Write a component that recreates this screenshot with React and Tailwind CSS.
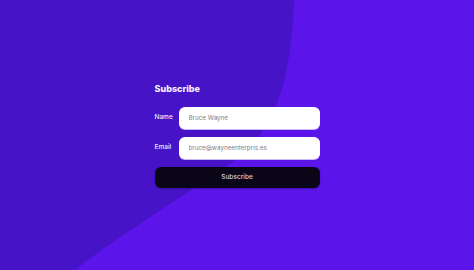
import React from "react";

function Backdrop() {
  return (
    <svg
      className="absolute inset-0 w-full h-full"
      viewBox="0 0 474 270"
      preserveAspectRatio="none"
      aria-hidden="true"
    >
      <path
        d="M0 0 H294 C291 70 281 125 235 160 C190 192 112 240 75 270 H0 Z"
        fill="#4613c6"
      />
    </svg>
  );
}

function Field({ label, placeholder, type = "text" }) {
  return (
    <div className="flex items-center">
      <label className="w-[24px] shrink-0 text-[6.5px] font-medium text-[#efe6ff]">{label}</label>
      <input
        type={type}
        placeholder={placeholder}
        className="h-[22px] w-[141px] rounded-[6px] bg-white pl-[10px] text-[6.3px] text-[#333] placeholder:text-[#808086] outline-none shadow-[0_1px_0_#c9b6ff]"
      />
    </div>
  );
}

export default function App() {
  return (
    <div
      className="relative w-[474px] h-[270px] overflow-hidden bg-[#5b15ea]"
      style={{ fontFamily: "Inter, 'Liberation Sans', sans-serif" }}
    >
      <Backdrop />
      <div className="relative flex h-full items-center justify-center pt-[2px]">
        <form className="flex w-[165px] flex-col" onSubmit={(e) => e.preventDefault()}>
          <h2 className="mb-[14px] text-[9px] font-extrabold leading-none text-[#f4eeff]">Subscribe</h2>
          <div className="flex flex-col gap-[8px]">
            <Field label="Name" placeholder="Bruce Wayné" />
            <Field label="Email" placeholder="bruce@wayneenterpris.es" type="email" />
            <button
              type="submit"
              className="h-[21px] w-full rounded-[6px] bg-[#0b0518] text-[6.5px] font-medium text-[#d9d4e6] shadow-[0_1px_2px_rgba(40,0,120,0.5)]"
            >
              Subscribe
            </button>
          </div>
        </form>
      </div>
    </div>
  );
}
